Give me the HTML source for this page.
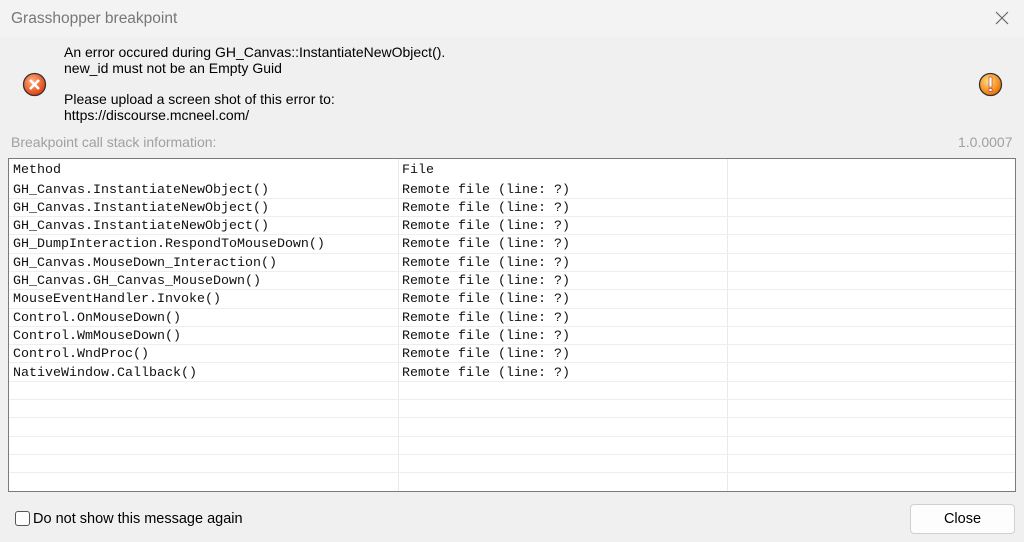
<!DOCTYPE html>
<html><head><style>
body{margin:0;width:1024px;height:542px;background:#f0f0f0;font-family:"Liberation Sans",Arial,sans-serif;position:relative;overflow:hidden}
.title{position:absolute;left:0;top:0;width:1024px;height:37px;background:#f3f3f3;}
.title span{position:absolute;left:11px;top:10px;font-size:15.5px;color:#777}
.x{position:absolute;left:994px;top:10px;width:16px;height:16px}
.msg{position:absolute;left:64px;font-size:14px;color:#000}
.grey{position:absolute;font-size:14px;color:#a0a0a0}
.tbl{position:absolute;left:8px;top:158px;width:1006px;height:332px;border:1px solid #7a7a7a;background:#fff;overflow:hidden}
.row{position:absolute;left:0;width:1006px;height:18.3px;border-bottom:1px solid #eeeeee;box-sizing:border-box;font-family:"Liberation Mono",monospace;font-size:13.33px;color:#111;line-height:19px}
.row span{position:absolute;top:0}
.c1{left:4px}.c2{left:393px}
.vl{position:absolute;top:0;width:1px;height:332px;background:#eaeaea}
.cb{position:absolute;left:15px;top:511px;width:13px;height:13px;border:1px solid #555;border-radius:3px;background:#fff}
.btn{position:absolute;left:910px;top:504px;width:105px;height:30px;border:1px solid #d0d0d0;border-radius:4px;background:#fdfdfd;box-sizing:border-box;text-align:center;line-height:28px;font-size:14.5px}
</style></head><body>
<div class="title"><span>Grasshopper breakpoint</span>
<svg class="x" viewBox="0 0 16 16"><path d="M2 2L14 14M14 2L2 14" stroke="#666" stroke-width="1.2"/></svg></div>
<svg style="position:absolute;left:22px;top:72px" width="25" height="25" viewBox="0 0 25 25"><defs><radialGradient id="g1" cx="40%" cy="35%" r="65%"><stop offset="0" stop-color="#ffb080"/><stop offset="1" stop-color="#e04010"/></radialGradient></defs><circle cx="12.5" cy="12.5" r="11" fill="url(#g1)" stroke="#333" stroke-width="1.3"/><path d="M8 8L17 17M17 8L8 17" stroke="#fff" stroke-width="2.6"/></svg>
<svg style="position:absolute;left:978px;top:72px" width="25" height="25" viewBox="0 0 25 25"><defs><radialGradient id="g2" cx="40%" cy="35%" r="65%"><stop offset="0" stop-color="#ffe080"/><stop offset="1" stop-color="#f07000"/></radialGradient></defs><circle cx="12.5" cy="12.5" r="11" fill="url(#g2)" stroke="#333" stroke-width="1.3"/><rect x="11" y="5" width="3" height="10" fill="#fff" stroke="#a33" stroke-width=".6"/><rect x="11" y="16.5" width="3" height="3" fill="#fff" stroke="#a33" stroke-width=".6"/></svg>
<div class="msg" style="top:44px">An error occured during GH_Canvas::InstantiateNewObject().</div>
<div class="msg" style="top:60px">new_id must not be an Empty Guid</div>
<div class="msg" style="top:91px">Please upload a screen shot of this error to:</div>
<div class="msg" style="top:107px">https://discourse.mcneel.com/</div>
<div class="grey" style="left:11px;top:134px">Breakpoint call stack information:</div>
<div class="grey" style="left:958px;top:134px">1.0.0007</div>
<div class="tbl">
<div class="vl" style="left:389px"></div><div class="vl" style="left:718px"></div>
<div class="row" style="top:2px;height:18px;border:none"><span class="c1">Method</span><span class="c2">File</span></div>
<div class="row" style="top:21.5px"><span class="c1">GH_Canvas.InstantiateNewObject()</span><span class="c2">Remote file (line: ?)</span></div>
<div class="row" style="top:39.8px"><span class="c1">GH_Canvas.InstantiateNewObject()</span><span class="c2">Remote file (line: ?)</span></div>
<div class="row" style="top:58.1px"><span class="c1">GH_Canvas.InstantiateNewObject()</span><span class="c2">Remote file (line: ?)</span></div>
<div class="row" style="top:76.4px"><span class="c1">GH_DumpInteraction.RespondToMouseDown()</span><span class="c2">Remote file (line: ?)</span></div>
<div class="row" style="top:94.7px"><span class="c1">GH_Canvas.MouseDown_Interaction()</span><span class="c2">Remote file (line: ?)</span></div>
<div class="row" style="top:113px"><span class="c1">GH_Canvas.GH_Canvas_MouseDown()</span><span class="c2">Remote file (line: ?)</span></div>
<div class="row" style="top:131.3px"><span class="c1">MouseEventHandler.Invoke()</span><span class="c2">Remote file (line: ?)</span></div>
<div class="row" style="top:149.6px"><span class="c1">Control.OnMouseDown()</span><span class="c2">Remote file (line: ?)</span></div>
<div class="row" style="top:167.9px"><span class="c1">Control.WmMouseDown()</span><span class="c2">Remote file (line: ?)</span></div>
<div class="row" style="top:186.2px"><span class="c1">Control.WndProc()</span><span class="c2">Remote file (line: ?)</span></div>
<div class="row" style="top:204.5px"><span class="c1">NativeWindow.Callback()</span><span class="c2">Remote file (line: ?)</span></div>
<div class="row" style="top:222.8px"></div>
<div class="row" style="top:241.1px"></div>
<div class="row" style="top:259.4px"></div>
<div class="row" style="top:277.7px"></div>
<div class="row" style="top:296px"></div>
<div class="row" style="top:314.3px"></div>
</div>
<div class="cb"></div>
<div style="position:absolute;left:33px;top:511px;font-size:14.5px">Do not show this message again</div>
<div class="btn">Close</div>
</body></html>
